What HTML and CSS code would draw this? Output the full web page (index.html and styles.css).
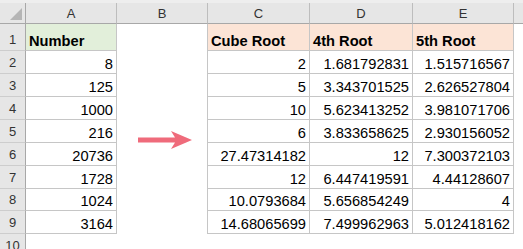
FILE: index.html
```html
<!DOCTYPE html>
<html lang="en">
<head>
  <meta charset="UTF-8" />
  <title>Roots</title>
  <link rel="stylesheet" href="styles.css">
</head>
<body>
  <div class="sheet">
    <div class="top-strip"></div>

    <!-- column headers -->
    <div class="row head">
      <div class="rh corner"><span class="tri"></span></div>
      <div class="ch ca">A</div>
      <div class="ch cb">B</div>
      <div class="ch cc">C</div>
      <div class="ch cd">D</div>
      <div class="ch ce">E</div>
      <div class="ch rest"></div>
    </div>

    <div class="row tall">
      <div class="rh">1</div>
      <div class="cell ca lbl green">Number</div>
      <div class="cb gap"></div>
      <div class="cell cc lbl peach">Cube Root</div>
      <div class="cell cd lbl peach">4th Root</div>
      <div class="cell ce lbl peach">5th Root</div>
    </div>
    <div class="row">
      <div class="rh">2</div>
      <div class="cell ca">8</div>
      <div class="cb gap"></div>
      <div class="cell cc">2</div>
      <div class="cell cd">1.681792831</div>
      <div class="cell ce">1.515716567</div>
    </div>
    <div class="row">
      <div class="rh">3</div>
      <div class="cell ca">125</div>
      <div class="cb gap"></div>
      <div class="cell cc">5</div>
      <div class="cell cd">3.343701525</div>
      <div class="cell ce">2.626527804</div>
    </div>
    <div class="row">
      <div class="rh">4</div>
      <div class="cell ca">1000</div>
      <div class="cb gap"></div>
      <div class="cell cc">10</div>
      <div class="cell cd">5.623413252</div>
      <div class="cell ce">3.981071706</div>
    </div>
    <div class="row">
      <div class="rh">5</div>
      <div class="cell ca">216</div>
      <div class="cb gap"></div>
      <div class="cell cc">6</div>
      <div class="cell cd">3.833658625</div>
      <div class="cell ce">2.930156052</div>
    </div>
    <div class="row">
      <div class="rh">6</div>
      <div class="cell ca">20736</div>
      <div class="cb gap"></div>
      <div class="cell cc">27.47314182</div>
      <div class="cell cd">12</div>
      <div class="cell ce">7.300372103</div>
    </div>
    <div class="row">
      <div class="rh">7</div>
      <div class="cell ca">1728</div>
      <div class="cb gap"></div>
      <div class="cell cc">12</div>
      <div class="cell cd">6.447419591</div>
      <div class="cell ce">4.44128607</div>
    </div>
    <div class="row short">
      <div class="rh">8</div>
      <div class="cell ca">1024</div>
      <div class="cb gap"></div>
      <div class="cell cc">10.0793684</div>
      <div class="cell cd">5.656854249</div>
      <div class="cell ce">4</div>
    </div>
    <div class="row">
      <div class="rh">9</div>
      <div class="cell ca">3164</div>
      <div class="cb gap"></div>
      <div class="cell cc">14.68065699</div>
      <div class="cell cd">7.499962963</div>
      <div class="cell ce">5.012418162</div>
    </div>
    <div class="row">
      <div class="rh">10</div>
    </div>

    <!-- arrow drawn over column B -->
    <svg class="arrow" width="58" height="24" viewBox="0 0 58 24">
      <path d="M2 9.5 H39 L35 3 L56 12 L35 21 L39 14.5 H2 Z" fill="#ef6b7b" />
    </svg>
  </div>
</body>
</html>
```

FILE: styles.css
```css
/* Basic reset */
body, html {
  margin: 0;
  padding: 0;
  height: 100%;
  overflow: hidden;
  background: #fff;
}
.sheet {
  position: relative;
  display: flex;
  flex-direction: column;
  width: 523px;
  height: 249px;
  font-family: "Liberation Sans", Arial, sans-serif;
  font-size: 11pt;
  color: #000;
}
/* strip above the column letters */
.top-strip {
  height: 10px;
  box-sizing: border-box;
  background: #e6e6e6;
  border-top: 3px solid #eeeeee;
}
/* rows */
.row {
  display: flex;
  height: 23px;
  flex-shrink: 0;
}
.row.head {
  height: 21px;
}
.row.tall {
  height: 27px;
}
.row.short {
  height: 22px;
}
/* column widths (border included) */
.rh { width: 26px; }
.ca { width: 91px; }
.cb { width: 91px; }
.cc { width: 102px; }
.cd { width: 103px; }
.ce { width: 101px; }
.rest { flex: 1; }
.rh, .ca, .cb, .cc, .cd, .ce {
  flex-shrink: 0;
  box-sizing: border-box;
}
/* header cells */
.ch {
  box-sizing: border-box;
  background: #e6e6e6;
  border-right: 1px solid #bdbdbd;
  border-bottom: 1px solid #a8a8a8;
  color: #333;
  font-size: 13px;
  display: flex;
  align-items: center;
  justify-content: center;
}
.ch.rest {
  border-right: none;
}
/* row number cells */
.rh {
  background: #e6e6e6;
  border-right: 1px solid #a8a8a8;
  border-bottom: 1px solid #cdcdcd;
  color: #333;
  font-size: 13px;
  display: flex;
  align-items: flex-end;
  justify-content: center;
  padding-bottom: 3px;
}
.row.head .rh {
  border-bottom-color: #a8a8a8;
}
.corner {
  justify-content: flex-end;
  padding: 0 3px 3px 0;
}
.tri {
  width: 12px;
  height: 12px;
  background: #b5b5b5;
  clip-path: polygon(100% 0, 100% 100%, 0 100%);
}
/* data cells */
.cell {
  border-right: 1px solid #c6c6c6;
  border-bottom: 1px solid #c6c6c6;
  display: flex;
  align-items: flex-end;
  justify-content: flex-end;
  padding: 0 3px;
  line-height: 17px;
  white-space: nowrap;
}
.cell.lbl {
  justify-content: flex-start;
  font-weight: bold;
}
.green {
  background: #e2efda;
}
.peach {
  background: #fce4d6;
}
.gap {
  border-right: 1px solid #c6c6c6;
}
/* arrow over column B */
.arrow {
  position: absolute;
  left: 136px;
  top: 128px;
}
```
